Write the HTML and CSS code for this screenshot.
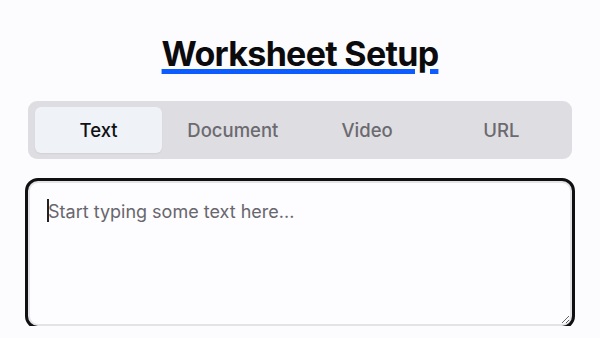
FILE: index.html
```html
<!DOCTYPE html>
<html lang="en">
<head>
<meta charset="utf-8">
<title>Worksheet Setup</title>
<link rel="stylesheet" href="styles.css">
</head>
<body>
<main class="page">
  <h1 class="title">Worksheet Setup</h1>
  <div class="tabs">
    <button class="tab active">Text</button>
    <button class="tab">Document</button>
    <button class="tab">Video</button>
    <button class="tab">URL</button>
  </div>
  <div class="field">
    <textarea class="input" placeholder="Start typing some text here..."></textarea>
    <span class="caret"></span>
  </div>
</main>
</body>
</html>
```
FILE: styles.css
```css
html, body {
  margin: 0;
  padding: 0;
  background: #fcfbfe;
}
body {
  font-family: Inter, "Liberation Sans", sans-serif;
}
.page {
  display: flex;
  flex-direction: column;
  padding: 0 28px;
}
.title {
  margin: 32px 0 0;
  text-align: center;
  font-size: 34px;
  line-height: 44px;
  font-weight: 700;
  color: #0b0b0d;
  letter-spacing: -0.7px;
  text-decoration: underline;
  text-decoration-color: #0d5cff;
  text-decoration-thickness: 5px;
  text-underline-offset: 3px;
  text-decoration-skip-ink: auto;
}
.tabs {
  margin-top: 25px;
  display: flex;
  gap: 7px;
  padding: 6px 7px;
  height: 58px;
  box-sizing: border-box;
  background: #dedde1;
  border-radius: 9px;
}
.tab {
  flex: 1;
  border: 0;
  background: transparent;
  font-family: Inter, "Liberation Sans", sans-serif;
  font-size: 18.5px;
  font-weight: 500;
  color: #6b6a70;
  border-radius: 6px;
  padding: 0;
}
.tab.active {
  background: #eff2f7;
  color: #111114;
  box-shadow: 0 1px 2px rgba(0,0,0,0.06);
}
.field {
  position: relative;
  margin-top: 22px;
  display: flex;
}
.input {
  flex: 1;
  height: 145px;
  box-sizing: border-box;
  resize: vertical;
  border: 2px solid #e3e3e8;
  border-radius: 10px;
  background: #fdfcfe;
  padding: 16px 18px;
  font-family: Inter, "Liberation Sans", sans-serif;
  font-size: 18px;
  line-height: 26px;
  color: #222;
  outline: 3px solid #101012;
  outline-offset: 0;
}
.input::placeholder {
  color: #68676d;
}
.caret {
  position: absolute;
  left: 19px;
  top: 18px;
  width: 1.5px;
  height: 23px;
  background: #222;
}
```
